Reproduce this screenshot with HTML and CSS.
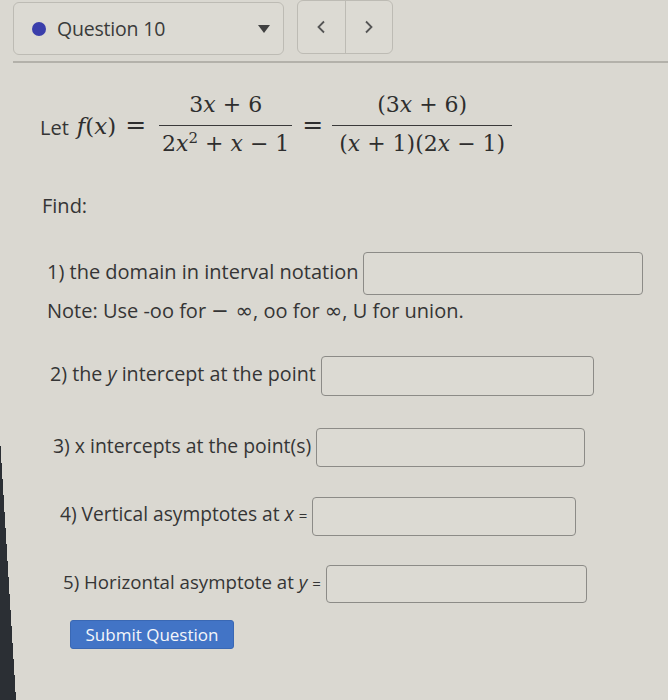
FILE: index.html
```html
<!DOCTYPE html>
<html>
<head>
<meta charset="utf-8">
<link rel="stylesheet" href="styles.css">
</head>
<body>
<div class="page">
  <div class="header">
    <div class="select">
      <span class="dot"></span>
      <span class="title">Question 10</span>
      <span class="caret"></span>
    </div>
    <div class="nav">
      <div class="btn prev">
        <svg width="10" height="14" viewBox="0 0 10 14"><path d="M8 1.5 L2.5 7 L8 12.5" fill="none" stroke="#555" stroke-width="1.8"/></svg>
      </div>
      <div class="btn next">
        <svg width="10" height="14" viewBox="0 0 10 14"><path d="M2 1.5 L7.5 7 L2 12.5" fill="none" stroke="#555" stroke-width="1.8"/></svg>
      </div>
    </div>
  </div>
  <div class="rule"></div>

  <div class="eq">
    <span class="let">Let</span>
    <span class="m fx"><i>f</i>(<i>x</i>)</span>
    <span class="m eqs">=</span>
    <span class="frac f1">
      <span class="num">3<i>x</i> + 6</span>
      <span class="den">2<i>x</i><sup>2</sup> + <i>x</i> − 1</span>
    </span>
    <span class="m eqs2">=</span>
    <span class="frac f2">
      <span class="num">(3<i>x</i> + 6)</span>
      <span class="den">(<i>x</i> + 1)(2<i>x</i> − 1)</span>
    </span>
  </div>

  <div class="find">Find:</div>

  <div class="row r1">
    <span class="label">1) the domain in interval notation</span>
    <span class="box b1"></span>
  </div>
  <div class="note">Note: Use -oo for <span class="sym">−&nbsp;∞</span>, oo for <span class="sym">∞</span>, U for union.</div>

  <div class="row r2">
    <span class="label">2) the <i>y</i> intercept at the point</span>
    <span class="box b2"></span>
  </div>
  <div class="row r3">
    <span class="label">3) x intercepts at the point(s)</span>
    <span class="box b3"></span>
  </div>
  <div class="row r4">
    <span class="label">4) Vertical asymptotes at <i>x</i> <span class="small">=</span></span>
    <span class="box b4"></span>
  </div>
  <div class="row r5">
    <span class="label">5) Horizontal asymptote at <i>y</i> <span class="small">=</span></span>
    <span class="box b5"></span>
  </div>

  <div class="submit-wrap">
    <button class="submit">Submit Question</button>
  </div>
</div>
</body>
</html>
```

FILE: styles.css
```css
html {
  background-color: #dad8d1;
  background-image: linear-gradient(to top right, #2b2f34 50%, rgba(0,0,0,0) 50%);
  background-repeat: no-repeat;
  background-size: 16px 262px;
  background-position: left bottom;
  min-height: 100%;
}
body {
  margin: 0;
  font-family: "Open Sans", "Liberation Sans", sans-serif;
  color: #353535;
  height: 700px;
  overflow: hidden;
}
.header {
  display: flex;
  align-items: flex-start;
  margin-left: 13px;
  height: 55px;
}
.select {
  margin-top: 2px;
  box-sizing: border-box;
  width: 271px;
  height: 53px;
  border: 1px solid #bdbbb4;
  border-radius: 6px;
  display: flex;
  align-items: center;
  padding-left: 18px;
  background: #dcdad3;
}
.dot {
  width: 14px;
  height: 14px;
  border-radius: 50%;
  background: #3a3eab;
  margin-right: 11px;
}
.title {
  font-size: 19.5px;
  color: #3a3a3a;
  letter-spacing: -0.2px;
}
.caret {
  margin-left: auto;
  margin-right: 13px;
  width: 0;
  height: 0;
  border-left: 6px solid transparent;
  border-right: 6px solid transparent;
  border-top: 8px solid #404040;
}
.nav {
  margin-left: 13px;
  display: flex;
  box-sizing: border-box;
  width: 96px;
  height: 54px;
  border: 1px solid #bdbbb4;
  border-radius: 6px;
  background: #dcdad3;
}
.btn {
  flex: 1;
  display: flex;
  align-items: center;
  justify-content: center;
}
.prev {
  border-right: 1px solid #bdbbb4;
}
.rule {
  margin-top: 6px;
  margin-left: 13px;
  height: 2px;
  background: #b3b1aa;
}

.eq {
  margin-top: 23px;
  margin-left: 40px;
  display: flex;
  align-items: center;
  height: 76px;
}
.let {
  font-size: 20px;
  margin-right: 8px;
  position: relative;
  top: 3px;
}
.m {
  font-family: "DejaVu Serif", "Liberation Serif", serif;
  font-size: 23px;
  color: #2e2e2e;
}
.m i, .frac i {
  font-style: italic;
}
.fx {
  margin-right: 9px;
  position: relative;
  top: 2px;
}
.eqs {
  font-size: 25px;
  margin-right: 13px;
}
.eqs2 {
  font-size: 25px;
  margin-left: 10px;
  margin-right: 9px;
}
.frac {
  display: inline-flex;
  flex-direction: column;
  align-items: center;
  font-family: "DejaVu Serif", "Liberation Serif", serif;
  font-size: 22px;
  color: #2e2e2e;
}
.f1 { width: 133px; }
.f2 { width: 180px; }
.num {
  align-self: stretch;
  text-align: center;
  line-height: 34px;
  padding-bottom: 3px;
  border-bottom: 1.5px solid #3a3a3a;
  white-space: nowrap;
}
.den {
  line-height: 34px;
  padding-top: 1px;
  white-space: nowrap;
}
.den sup {
  font-size: 15px;
  line-height: 0;
}

.find {
  margin-top: 30px;
  margin-left: 42px;
  font-size: 20px;
  line-height: 28px;
}

.row {
  display: flex;
  align-items: center;
}
.label {
  line-height: 26px;
  padding-bottom: 4px;
  white-space: nowrap;
  margin-right: 5px;
}
.label .small {
  font-size: 15px;
}
.box {
  box-sizing: border-box;
  display: block;
  border: 1.5px solid #8c8b87;
  border-radius: 4px;
  background: #dcdad3;
}
.r1 { margin-top: 32px; margin-left: 47px; font-size: 20px; }
.b1 { width: 280px; height: 43px; }
.note {
  margin-top: 3px;
  margin-left: 47px;
  font-size: 20px;
  line-height: 26px;
}
.sym {
  font-family: "DejaVu Sans", sans-serif;
  font-size: 21px;
}
.r2 { margin-top: 32px; margin-left: 50px; font-size: 19.7px; }
.b2 { width: 273px; height: 40px; }
.r3 { margin-top: 32px; margin-left: 53px; font-size: 19.4px; }
.b3 { width: 269px; height: 39px; }
.r4 { margin-top: 30px; margin-left: 60px; font-size: 19.2px; }
.b4 { width: 264px; height: 39px; }
.r5 { margin-top: 29px; margin-left: 63px; font-size: 18.7px; }
.b5 { width: 261px; height: 38px; }

.submit-wrap {
  margin-top: 17px;
  margin-left: 70px;
}
.submit {
  font-family: "Open Sans", "Liberation Sans", sans-serif;
  font-size: 17px;
  color: #f4f6fa;
  background: #4274c6;
  border: 1px solid #3a68b4;
  border-radius: 3px;
  width: 164px;
  height: 29px;
  padding: 0;
  line-height: 26px;
}
```
